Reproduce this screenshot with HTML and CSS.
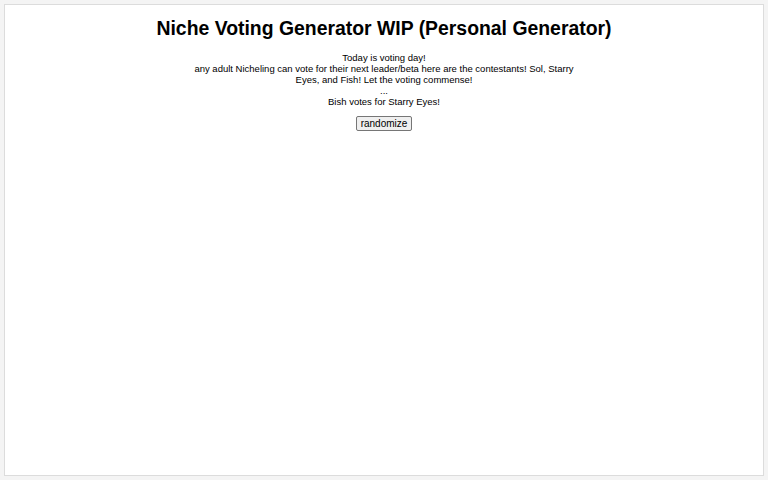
FILE: index.html
```html
<!DOCTYPE html>
<html lang="en">
<head>
    <meta charset="UTF-8">
    <meta name="viewport" content="width=device-width, initial-scale=1.0">
    <title>Niche Voting Generator WIP (Personal Generator)</title>
    <link rel="stylesheet" href="styles.css">
</head>
<body>

    <div class="page">
        <h1>Niche Voting Generator WIP (Personal Generator)</h1>

        <div class="output" id="output">
            Today is voting day!<br>
            any adult Nicheling can vote for their next leader/beta here are the contestants! Sol, Starry Eyes, and Fish! Let the voting commense!<br>
            ...<br>
            Bish votes for Starry Eyes!
        </div>

        <button class="randomize" onclick="randomize()">randomize</button>
    </div>

    <script>
        const voters = ['Bish', 'Sol', 'Fish', 'Starry Eyes', 'Moss', 'Pebble'];
        const contestants = ['Sol', 'Starry Eyes', 'Fish'];

        function pick(list) {
            return list[Math.floor(Math.random() * list.length)];
        }

        // Rebuild the text with a new voter and choice
        function randomize() {
            document.getElementById('output').innerHTML =
                'Today is voting day!<br>' +
                'any adult Nicheling can vote for their next leader/beta here are the contestants! Sol, Starry Eyes, and Fish! Let the voting commense!<br>' +
                '...<br>' +
                pick(voters) + ' votes for ' + pick(contestants) + '!';
        }
    </script>

</body>
</html>
```

FILE: styles.css
```css
* {
    margin: 0;
    padding: 0;
    box-sizing: border-box;
}

html, body {
    height: 100%;
}

body {
    font-family: "Liberation Sans", Arial, sans-serif;
    background-color: #f4f4f4;
    padding: 4px;
}

.page {
    height: 100%;
    background-color: #ffffff;
    border: 1px solid #dcdcdc;
    display: flex;
    flex-direction: column;
    align-items: center;
    padding-top: 12px;
}

h1 {
    font-size: 19.4px;
    font-weight: bold;
    color: #000;
    line-height: 23px;
    margin-bottom: 12px;
}

.output {
    max-width: 388px;
    text-align: center;
    font-size: 9.5px;
    line-height: 11px;
    color: #000;
}

.randomize {
    margin-top: 9px;
    font-family: "Liberation Sans", Arial, sans-serif;
    font-size: 10px;
    padding: 0 4px;
    height: 15px;
    background-color: #efefef;
    border: 1px solid #767676;
    border-radius: 2px;
    color: #000;
}
```
